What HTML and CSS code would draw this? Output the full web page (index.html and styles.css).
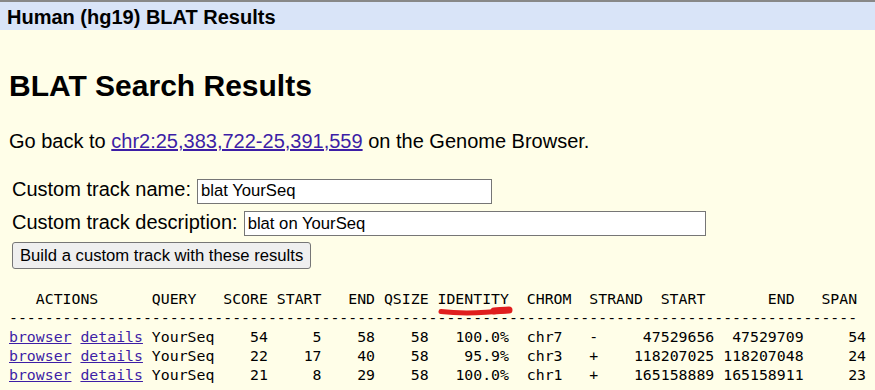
FILE: index.html
```html
<!DOCTYPE html>
<html>
<head>
<meta charset="utf-8">
<title>Human (hg19) BLAT Results</title>
<link rel="stylesheet" href="styles.css">
</head>
<body>
<div class="titlebar">Human (hg19) BLAT Results</div>
<main class="content">
  <h2 class="heading">BLAT Search Results</h2>
  <p class="goback">Go back to <a href="#">chr2:25,383,722-25,391,559</a> on the Genome Browser.</p>
  <form class="ctform">
    <div class="row"><label class="lbl" for="ctname">Custom track name:</label><input class="field field-name" id="ctname" type="text" value="blat YourSeq"></div>
    <div class="row"><label class="lbl" for="ctdesc">Custom track description:</label><input class="field field-desc" id="ctdesc" type="text" value="blat on YourSeq"></div>
    <div class="row"><button class="btn" type="button">Build a custom track with these results</button></div>
  </form>
  <div class="results">
<pre class="table">   ACTIONS      QUERY   SCORE START   END QSIZE IDENTITY  CHROM  STRAND  START       END   SPAN
-----------------------------------------------------------------------------------------------
<a href="#">browser</a> <a href="#">details</a> YourSeq    54     5    58    58   100.0%  chr7   -     47529656  47529709     54
<a href="#">browser</a> <a href="#">details</a> YourSeq    22    17    40    58    95.9%  chr3   +    118207025 118207048     24
<a href="#">browser</a> <a href="#">details</a> YourSeq    21     8    29    58   100.0%  chr1   +    165158889 165158911     23</pre>
    <svg class="mark" width="80" height="14" viewBox="0 0 80 14"><path d="M5 7.5 C 22 9.5, 48 9, 71 6.5" fill="none" stroke="#e01e1e" stroke-width="5" stroke-linecap="round"/><path d="M58 7 C 65 6.5, 69 6, 73 6" fill="none" stroke="#e01e1e" stroke-width="7" stroke-linecap="round"/></svg>
  </div>
</main>
</body>
</html>
```
FILE: styles.css
```css
html, body {
  margin: 0;
  padding: 0;
  background: #fffee8;
  color: #000;
  font-family: "Liberation Sans", Arial, sans-serif;
}
.titlebar {
  border-top: 2px solid #888888;
  background: #d9e4f8;
  height: 27px;
  padding: 1px 0 0 7px;
  font-size: 20px;
  font-weight: bold;
  line-height: 28px;
  white-space: nowrap;
}
.content {
  padding: 0 9px;
}
.heading {
  margin: 38px 0 0 0;
  font-size: 30px;
  line-height: 36px;
  font-weight: bold;
}
.goback {
  margin: 25px 0 0 0;
  font-size: 20px;
  line-height: 24px;
}
a {
  color: #3d1ea6;
}
.ctform {
  margin: 24px 0 0 3px;
}
.row {
  display: flex;
  align-items: baseline;
  gap: 6px;
  margin-bottom: 6px;
}
.lbl {
  font-size: 20px;
  line-height: 24px;
}
.field {
  box-sizing: border-box;
  height: 25px;
  border: 1px solid #767676;
  border-radius: 0;
  background: #fff;
  padding: 0 3px;
  font-family: "Liberation Sans", Arial, sans-serif;
  font-size: 16.67px;
  color: #000;
}
.field-name { width: 295px; }
.field-desc { width: 462px; }
.btn {
  box-sizing: border-box;
  height: 27px;
  padding: 0 7px;
  border: 1px solid #767676;
  border-radius: 3px;
  background: #efefef;
  font-family: "Liberation Sans", Arial, sans-serif;
  font-size: 16.67px;
  color: #000;
}
.results {
  position: relative;
  margin-top: 20px;
}
.table {
  margin: 0;
  font-family: "DejaVu Sans Mono", monospace;
  font-size: 14.83px;
  line-height: 19px;
}
.mark {
  position: absolute;
  left: 427px;
  top: 15px;
}
```
